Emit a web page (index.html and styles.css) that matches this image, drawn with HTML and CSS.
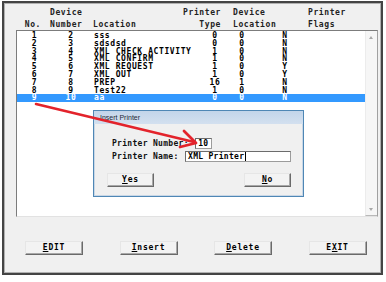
FILE: index.html
```html
<!DOCTYPE html>
<html lang="en">
<head>
    <meta charset="UTF-8">
    <title>Printers</title>
    <link rel="stylesheet" href="styles.css">
</head>
<body>
    <div class="window">
        <!-- Column headers -->
        <div class="head">
            <span></span>
            <span class="h-num">Device</span>
            <span></span>
            <span class="h-type">Printer</span>
            <span class="h-loc">Device</span>
            <span class="h-flag">Printer</span>
            <span class="h-no">No.</span>
            <span class="h-num">Number</span>
            <span class="h-location">Location</span>
            <span class="h-type">Type</span>
            <span class="h-loc">Location</span>
            <span class="h-flag">Flags</span>
        </div>

        <!-- Printer list -->
        <div class="list">
            <div class="rows">
                <div class="row"><span>1</span><span>2</span><span class="loc">sss</span><span>0</span><span>0</span><span>N</span></div>
                <div class="row"><span>2</span><span>3</span><span class="loc">sdsdsd</span><span>0</span><span>0</span><span>N</span></div>
                <div class="row"><span>3</span><span>4</span><span class="loc">XML CHECK ACTIVITY</span><span>1</span><span>0</span><span>N</span></div>
                <div class="row"><span>4</span><span>5</span><span class="loc">XML CONFIRM</span><span>1</span><span>0</span><span>N</span></div>
                <div class="row"><span>5</span><span>6</span><span class="loc">XML REQUEST</span><span>1</span><span>0</span><span>Y</span></div>
                <div class="row"><span>6</span><span>7</span><span class="loc">XML OUT</span><span>1</span><span>0</span><span>Y</span></div>
                <div class="row"><span>7</span><span>8</span><span class="loc">PREP</span><span>16</span><span>1</span><span>N</span></div>
                <div class="row"><span>8</span><span>9</span><span class="loc">Test22</span><span>1</span><span>0</span><span>N</span></div>
                <div class="row selected"><span>9</span><span>10</span><span class="loc">aa</span><span>0</span><span>0</span><span>N</span></div>
            </div>
            <div class="scrollbar">
                <span class="tri up"></span>
                <span class="tri down"></span>
            </div>
        </div>

        <!-- Bottom buttons -->
        <div class="buttons">
            <button class="btn"><u>E</u>DIT</button>
            <button class="btn"><u>I</u>nsert</button>
            <button class="btn"><u>D</u>elete</button>
            <button class="btn">E<u>X</u>IT</button>
        </div>

        <!-- Insert dialog -->
        <div class="dialog">
            <div class="dialog-title">Insert Printer</div>
            <div class="dialog-body">
                <div class="field-row">
                    <span class="label">Printer Number:</span>
                    <span class="field field-num">10</span>
                </div>
                <div class="field-row">
                    <span class="label">Printer Name:</span>
                    <span class="field field-name">XML Printer<span class="caret"></span></span>
                </div>
                <div class="dialog-buttons">
                    <button class="btn small"><u>Y</u>es</button>
                    <button class="btn small"><u>N</u>o</button>
                </div>
            </div>
        </div>
    </div>

    <!-- Red annotation arrow -->
    <svg class="mark" width="386" height="282" viewBox="0 0 386 282">
        <line x1="36" y1="104" x2="194" y2="142" stroke="#e3232b" stroke-width="2.6" stroke-linecap="round"/>
        <polyline points="184,131 196,143 180,147" fill="none" stroke="#e3232b" stroke-width="2.8" stroke-linecap="round" stroke-linejoin="round"/>
    </svg>
</body>
</html>
```

FILE: styles.css
```css
* {
    margin: 0;
    padding: 0;
    box-sizing: border-box;
}

body {
    background: #fff;
    font-family: "DejaVu Sans Mono", "Liberation Mono", monospace;
    font-weight: bold;
    font-size: 8px;
    letter-spacing: 0.6px;
    color: #111;
}

.window {
    position: relative;
    margin: 1px 0 0 2px;
    width: 381px;
    height: 274px;
    background: #f0f0f0;
    border: 2px solid #444;
    box-shadow: inset 0 0 0 1px #b0b0b0;
}

/* headers */
.head {
    display: grid;
    grid-template-columns: 24px 52px 87px 41px 87px 60px;
    grid-auto-rows: 12px;
    line-height: 12px;
    padding: 4px 0 0 13px;
    color: #222;
    white-space: nowrap;
}

.h-no {
    text-align: right;
}

.h-num {
    padding-left: 9px;
}

.h-type {
    text-align: right;
}

.h-loc {
    padding-left: 12px;
}

/* list */
.list {
    display: flex;
    margin-left: 12px;
    margin-top: -1px;
    width: 362px;
    height: 187px;
    background: #fff;
    border: 1px solid #a0a0a0;
    border-left-color: #7c7c7c;
    border-top-color: #7c7c7c;
    border-bottom-color: #e2e2e2;
}

.rows {
    flex: 1;
    padding-top: 1px;
}

.row {
    display: grid;
    grid-template-columns: 35px 38px 110px 30px 24px 62px;
    height: 7.8px;
    line-height: 7.8px;
    color: #000;
    white-space: nowrap;
}

.row span {
    text-align: center;
}

.row .loc {
    text-align: left;
    padding-left: 4px;
}

.row.selected {
    background: #3399ff;
    color: #fff;
}

.scrollbar {
    position: relative;
    width: 12px;
    background: #f6f6f6;
    border-left: 1px solid #ececec;
    border-bottom: 1px solid #b8b8b8;
}

.tri {
    position: absolute;
    left: 3px;
    width: 0;
    height: 0;
    border-left: 2.5px solid transparent;
    border-right: 2.5px solid transparent;
}

.tri.up {
    top: 5px;
    border-bottom: 3px solid #a8a8a8;
}

.tri.down {
    bottom: 4px;
    border-top: 3px solid #a8a8a8;
}

/* buttons */
.buttons {
    display: flex;
    gap: 36.5px;
    margin-top: 24px;
    padding-left: 21px;
}

.btn {
    width: 58px;
    height: 14px;
    font-family: inherit;
    font-weight: bold;
    font-size: 8px;
    letter-spacing: 0.8px;
    line-height: 12px;
    color: #000;
    background: #f3f3f3;
    border: 1px solid;
    border-color: #e6e6e6 #6a6a6a #6a6a6a #e6e6e6;
    box-shadow: inset -1px -1px 0 #a8a8a8;
}

.btn.small {
    width: 47px;
}

/* dialog */
.dialog {
    position: absolute;
    left: 89px;
    top: 107px;
    width: 211px;
    height: 87px;
    background: #f0f0f0;
    border: 1px solid #4f87b5;
    box-shadow: inset 0 0 0 1px #c9d7e6;
}

.dialog-title {
    height: 13px;
    line-height: 13px;
    padding-left: 6px;
    font-family: "Liberation Sans", Arial, sans-serif;
    font-weight: normal;
    font-size: 7px;
    letter-spacing: 0;
    color: #1e2a38;
    background: linear-gradient(#c3d5ea, #d3e0ef);
}

.dialog-body {
    padding: 14px 12px 0 18px;
}

.field-row {
    display: flex;
    align-items: center;
    gap: 6.5px;
    height: 11px;
    letter-spacing: 0.3px;
}

.field-row + .field-row {
    margin-top: 2px;
}

.label {
    line-height: 11px;
    color: #111;
    white-space: nowrap;
}

.field {
    display: flex;
    align-items: center;
    height: 11px;
    padding-left: 2px;
    background: #fff;
    border: 1px solid #9c9c9c;
    border-top-color: #6c6c6c;
    border-left-color: #6c6c6c;
    color: #000;
    white-space: nowrap;
}

.field-num {
    width: 17px;
}

.field-name {
    width: 107px;
}

.caret {
    width: 1px;
    height: 9px;
    margin-left: 1px;
    background: #000;
}

.dialog-buttons {
    display: flex;
    justify-content: space-between;
    margin-top: 11px;
    margin-left: -5px;
}

/* annotation */
.mark {
    position: absolute;
    left: 0;
    top: 0;
    pointer-events: none;
}
```
